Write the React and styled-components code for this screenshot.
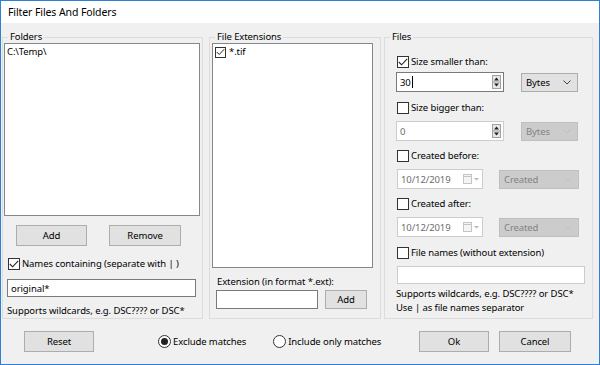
import React from 'react'
import styled, { createGlobalStyle } from 'styled-components'

const Global = createGlobalStyle`
  html, body { margin: 0; padding: 0; background: #f0f0f0; }
  body { font-family: "Noto Sans", "Open Sans", sans-serif; font-size: 9.5px; letter-spacing: -0.1px; color: #000; }
  * { box-sizing: border-box; }
`

const Window = styled.div`
  width: 600px;
  height: 365px;
  border: 1px solid #2f7fd4;
  background: #f0f0f0;
  display: flex;
  flex-direction: column;
  overflow: hidden;
`
const TitleBar = styled.div`
  height: 22px;
  background: #fff;
  display: flex;
  align-items: center;
  padding-left: 7px;
  font-size: 10.5px;
  letter-spacing: -0.1px;
`
const Content = styled.div`
  padding: 7px 0 0 1px;
  display: flex;
  flex-direction: column;
  flex: 1;
`
const Groups = styled.div`
  display: flex;
  align-items: flex-start;
`
const Group = styled.fieldset`
  margin: 0 0 0 ${p => p.$ml || 0}px;
  width: ${p => p.$w}px;
  height: 289px;
  border: 1px solid #dcdcdc;
  padding: 0;
  min-width: 0;
`
const Legend = styled.legend`
  padding: 0 2px;
  margin-left: 5px;
  line-height: 14px;
`
const GroupBody = styled.div`
  display: flex;
  flex-direction: column;
  padding-left: ${p => p.$pl || 0}px;
`
const ListBox = styled.div`
  width: ${p => p.$w}px;
  height: ${p => p.$h}px;
  margin-top: -1px;
  background: #fff;
  border: 1px solid #828790;
  padding: 1px 2px;
`
const ListItem = styled.div`
  display: flex;
  align-items: center;
  gap: 3px;
  height: 14px;
  line-height: 14px;
`
const Row = styled.div`
  display: flex;
  align-items: center;
  margin-top: ${p => p.$mt || 0}px;
  margin-left: ${p => p.$ml || 0}px;
`
const Button = styled.div`
  width: ${p => p.$w}px;
  height: ${p => p.$h || 21}px;
  margin-left: ${p => p.$ml || 0}px;
  background: #e1e1e1;
  border: 1px solid #adadad;
  display: flex;
  align-items: center;
  justify-content: center;
`
const TextBox = styled.div`
  width: ${p => p.$w}px;
  height: ${p => p.$h || 18}px;
  margin-left: ${p => p.$ml || 0}px;
  background: #fff;
  border: 1px solid ${p => (p.$disabled ? '#cccccc' : '#7a7a7a')};
  color: ${p => (p.$disabled ? '#6d6d6d' : '#000')};
  display: flex;
  align-items: center;
  padding: 0 2px 0 3px;
`
const Caret = styled.span`
  display: inline-block;
  width: 1px;
  height: 12px;
  background: #000;
  margin-left: 1px;
`
const Grow = styled.span`
  flex: 1;
`
const Select = styled.div`
  width: ${p => p.$w}px;
  height: 19px;
  margin-left: ${p => p.$ml || 0}px;
  background: ${p => (p.$disabled ? '#cccccc' : '#e1e1e1')};
  border: 1px solid ${p => (p.$disabled ? '#bfbfbf' : '#adadad')};
  color: ${p => (p.$disabled ? '#838383' : '#000')};
  display: flex;
  align-items: center;
  padding: 0 6px 0 4px;
`
const CheckLabel = styled.label`
  display: flex;
  align-items: center;
  gap: 2px;
  line-height: 14px;
  white-space: nowrap;
`
const Box = styled.span`
  width: ${p => p.$s || 12}px;
  height: ${p => p.$s || 12}px;
  border: 1px solid #333;
  background: #fff;
  display: inline-flex;
  align-items: center;
  justify-content: center;
  flex: none;
`
const Round = styled(Box)`
  border-radius: 50%;
  width: 13px;
  height: 13px;
`
const Dot = styled.span`
  width: 7px;
  height: 7px;
  border-radius: 50%;
  background: #222;
`
const Hint = styled.div`
  line-height: 14px;
  margin-top: ${p => p.$mt || 0}px;
  margin-left: ${p => p.$ml || 0}px;
  white-space: nowrap;
`
const Footer = styled.div`
  flex: 1;
  display: flex;
  align-items: center;
  padding: 0 28px 0 22px;
`
const Radio = styled(CheckLabel)`
  margin-left: ${p => p.$ml}px;
`
const Right = styled.div`
  margin-left: auto;
  display: flex;
  gap: 10px;
`

const Tick = () => (
  <svg width="10" height="8" viewBox="0 0 10 8">
    <polyline points="0.8,4 3.6,6.8 9.2,0.8" fill="none" stroke="#222" strokeWidth="1.1" />
  </svg>
)

const Check = ({ on, children, s }) => (
  <CheckLabel>
    <Box $s={s}>{on && <Tick />}</Box>
    {children}
  </CheckLabel>
)

const Chevron = ({ color }) => (
  <svg width="8" height="5" viewBox="0 0 8 5">
    <polyline points="0.5,0.5 4,4 7.5,0.5" fill="none" stroke={color} strokeWidth="1" />
  </svg>
)

const Spin = () => (
  <svg width="9" height="14" viewBox="0 0 9 14">
    <rect x="0.5" y="0.5" width="8" height="13" fill="#e6e6e6" stroke="#a0a0a0" />
    <line x1="0.5" y1="7" x2="8.5" y2="7" stroke="#a0a0a0" />
    <polygon points="2,5.5 4.5,2.5 7,5.5" fill="#222" />
    <polygon points="2,8.5 4.5,11.5 7,8.5" fill="#222" />
  </svg>
)

const DateIcons = () => (
  <svg width="17" height="10" viewBox="0 0 17 10">
    <rect x="0.5" y="0.5" width="8" height="9" fill="#f4f4f4" stroke="#c4c4c4" />
    <line x1="0.5" y1="2.5" x2="8.5" y2="2.5" stroke="#c4c4c4" />
    <polygon points="11,4 16,4 13.5,6.5" fill="#b8b8b8" />
  </svg>
)

const DatePicker = () => (
  <TextBox $w={86} $h={20} $disabled>
    10/12/2019
    <Grow />
    <DateIcons />
  </TextBox>
)

export default function App() {
  return (
    <Window>
      <Global />
      <TitleBar>Filter Files And Folders</TitleBar>
      <Content>
        <Groups>
          <Group $w={201}>
            <Legend>Folders</Legend>
            <GroupBody $pl={1}>
              <ListBox $w={196} $h={173}>
                <ListItem>C:\Temp\</ListItem>
              </ListBox>
              <Row $mt={9}>
                <Button $w={71} $ml={12}>Add</Button>
                <Button $w={72} $ml={22}>Remove</Button>
              </Row>
              <Row $mt={11} $ml={4}>
                <Check on>Names containing (separate with | )</Check>
              </Row>
              <Row $mt={8} $ml={3}>
                <TextBox $w={189}>original*</TextBox>
              </Row>
              <Hint $mt={7} $ml={3}>Supports wildcards, e.g. DSC???? or DSC*</Hint>
            </GroupBody>
          </Group>

          <Group $w={172} $ml={6}>
            <Legend>File Extensions</Legend>
            <GroupBody $pl={2}>
              <ListBox $w={161} $h={225}>
                <ListItem>
                  <Box $s={11}><Tick /></Box>*.tif
                </ListItem>
              </ListBox>
              <Hint $mt={7} $ml={5}>Extension (in format *.ext):</Hint>
              <Row $mt={1} $ml={4}>
                <TextBox $w={102} $h={19} />
                <Button $w={42} $h={19} $ml={7}>Add</Button>
              </Row>
            </GroupBody>
          </Group>

          <Group $w={209} $ml={3}>
            <Legend>Files</Legend>
            <GroupBody $pl={11}>
              <Row $mt={11} $ml={1}>
                <Check on>Size smaller than:</Check>
              </Row>
              <Row $mt={3}>
                <TextBox $w={108} $h={20}>
                  30<Caret />
                  <Grow />
                  <Spin />
                </TextBox>
                <Select $w={57} $ml={17}>
                  Bytes<Grow /><Chevron color="#444" />
                </Select>
              </Row>
              <Row $mt={9} $ml={1}>
                <Check>Size bigger than:</Check>
              </Row>
              <Row $mt={6}>
                <TextBox $w={108} $h={20} $disabled>
                  0
                  <Grow />
                  <Spin />
                </TextBox>
                <Select $w={57} $ml={17} $disabled>
                  Bytes<Grow /><Chevron color="#bdbdbd" />
                </Select>
              </Row>
              <Row $mt={8} $ml={1}>
                <Check>Created before:</Check>
              </Row>
              <Row $mt={6} $ml={1}>
                <DatePicker />
                <Select $w={80} $ml={16} $disabled>
                  Created<Grow /><Chevron color="#bdbdbd" />
                </Select>
              </Row>
              <Row $mt={8} $ml={1}>
                <Check>Created after:</Check>
              </Row>
              <Row $mt={6} $ml={1}>
                <DatePicker />
                <Select $w={80} $ml={16} $disabled>
                  Created<Grow /><Chevron color="#bdbdbd" />
                </Select>
              </Row>
              <Row $mt={9} $ml={1}>
                <Check>File names (without extension)</Check>
              </Row>
              <Row $mt={6} $ml={1}>
                <TextBox $w={188} $disabled />
              </Row>
              <Hint $mt={3}>Supports wildcards, e.g. DSC???? or DSC*</Hint>
              <Hint>Use | as file names separator</Hint>
            </GroupBody>
          </Group>
        </Groups>

        <Footer>
          <Button $w={70}>Reset</Button>
          <Radio $ml={64}>
            <Round><Dot /></Round>Exclude matches
          </Radio>
          <Radio $ml={27}>
            <Round />Include only matches
          </Radio>
          <Right>
            <Button $w={70}>Ok</Button>
            <Button $w={72}>Cancel</Button>
          </Right>
        </Footer>
      </Content>
    </Window>
  )
}
